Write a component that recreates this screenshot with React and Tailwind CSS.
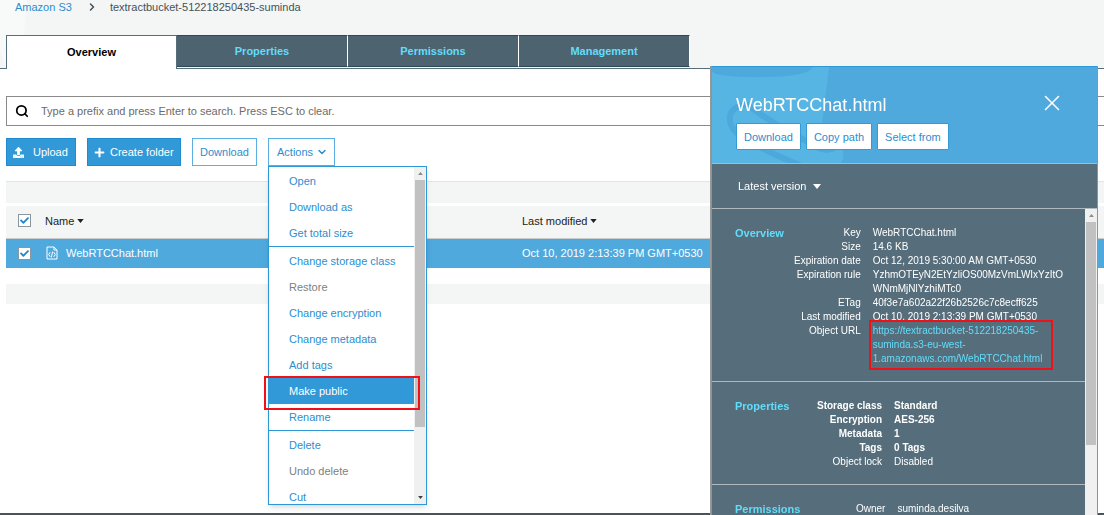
import React from "react";
import { ChevronDown, ChevronRight, Search, X } from "lucide-react";
import { FaCheck, FaPlus, FaUpload } from "react-icons/fa";

const tabs = ["Overview", "Properties", "Permissions", "Management"];

const menuGroups = [
  [{ label: "Open" }, { label: "Download as" }, { label: "Get total size" }],
  [
    { label: "Change storage class" },
    { label: "Restore", disabled: true },
    { label: "Change encryption" },
    { label: "Change metadata" },
    { label: "Add tags" },
    { label: "Make public", active: true },
    { label: "Rename" },
  ],
  [{ label: "Delete" }, { label: "Undo delete", disabled: true }, { label: "Cut" }],
];

const Triangle = ({ up = false, className = "" }) => (
  <svg viewBox="0 0 8 5" className={className} fill="currentColor" aria-hidden="true">
    <path d={up ? "M0 5h8L4 0z" : "M0 0h8L4 5z"} />
  </svg>
);

const FileCodeIcon = () => (
  <svg viewBox="0 0 12 14" className="h-[14px] w-3" fill="none" stroke="currentColor" aria-hidden="true">
    <path d="M1 1h7l3 3v9H1z" />
    <path d="M8 1v3h3" />
    <path d="M4.200 6.200 2.700 8.500l1.500 2.300M7.800 6.200l1.500 2.300-1.500 2.300M6.700 5.500 5.300 11.500" />
  </svg>
);

const Checkbox = ({ label }) => (
  <label className="relative block size-[13px]">
    <input
      type="checkbox"
      defaultChecked
      aria-label={label}
      className="block size-[13px] appearance-none border border-[#8b979d] bg-white"
    />
    <FaCheck className="pointer-events-none absolute left-0.5 top-0.5 size-[9px] text-[#1f86cc]" />
  </label>
);

const Scrollbar = ({ className = "", thumb }) => (
  <div className={`flex w-3 flex-col bg-[#f0f0f0] ${className}`} aria-hidden="true">
    <div className="flex h-[13px] shrink-0 items-center justify-center text-[#8a8a8a]">
      <Triangle up className="h-[3px] w-[5px]" />
    </div>
    <div className={`mx-px shrink-0 bg-[#c1c1c1] ${thumb}`} />
    <div className="mt-auto flex h-[13px] shrink-0 items-center justify-center text-[#404040]">
      <Triangle className="h-[3px] w-[5px]" />
    </div>
  </div>
);

const ActionsMenu = () => (
  <div className="absolute left-0 top-[28px] z-10 flex h-[339px] w-[159px] border border-[#2e97d6] bg-white shadow-md">
    <div className="relative flex-1">
      <div className="h-full overflow-hidden">
        {menuGroups.map((group, i) => (
          <ul key={i} className={`pt-px ${i > 0 ? "border-t border-[#2e97d6]" : ""}`}>
            {group.map(({ label, disabled, active }) => (
              <li key={label}>
                <button
                  disabled={disabled}
                  className={`block h-[26px] w-full pl-5 text-left ${
                    active ? "bg-[#3199d8] text-white" : disabled ? "text-[#808080]" : "text-[#2d8dd0]"
                  }`}
                >
                  {label}
                </button>
              </li>
            ))}
          </ul>
        ))}
      </div>
      <div className="pointer-events-none absolute -left-[5px] -right-[6px] top-[209px] h-[34px] border-2 border-[#ee1118]" />
    </div>
    <Scrollbar thumb="h-[247px]" />
  </div>
);

const Section = ({ title, titleWidth, rows }) => (
  <section className="flex border-t border-[#aebac0] pb-[15px] pl-[23px] pr-5 pt-[17px]">
    <h3 className={`shrink-0 text-[11px] font-bold text-[#62dcfb] ${titleWidth}`}>{title}</h3>
    <dl className="grid flex-1 grid-cols-[auto_1fr] gap-x-3">
      {rows.map(({ label, value, bold }) => (
        <div key={label} className={`contents ${bold ? "font-bold" : ""}`}>
          <dt className="whitespace-nowrap text-right">{label}</dt>
          <dd className="break-all">{value}</dd>
        </div>
      ))}
    </dl>
  </section>
);

const objectUrl = (
  <a
    href="#url"
    className="block w-[176px] text-[#62dcfb] outline-2 outline-offset-2 outline-[#ee1118]"
  >
    https://textractbucket-512218250435-
    <br />
    suminda.s3-eu-west-
    <br />
    1.amazonaws.com/WebRTCChat.html
  </a>
);

const overviewRows = [
  { label: "Key", value: "WebRTCChat.html" },
  { label: "Size", value: "14.6 KB" },
  { label: "Expiration date", value: "Oct 12, 2019 5:30:00 AM GMT+0530" },
  {
    label: "Expiration rule",
    value: (
      <>
        YzhmOTEyN2EtYzliOS00MzVmLWIxYzItO
        <br />
        WNmMjNlYzhiMTc0
      </>
    ),
  },
  { label: "ETag", value: "40f3e7a602a22f26b2526c7c8ecff625" },
  { label: "Last modified", value: "Oct 10, 2019 2:13:39 PM GMT+0530" },
  { label: "Object URL", value: objectUrl },
];

const propertyRows = [
  { label: "Storage class", value: "Standard", bold: true },
  { label: "Encryption", value: "AES-256", bold: true },
  { label: "Metadata", value: "1", bold: true },
  { label: "Tags", value: "0 Tags", bold: true },
  { label: "Object lock", value: "Disabled" },
];

const DetailsPanel = () => (
  <aside className="fixed bottom-0 right-1.5 top-[66px] flex w-[387px] flex-col overflow-hidden border-x border-[#4ba7dd] bg-[#566e7b] text-[10px] leading-[14px] text-white shadow-[-1px_0_0_#999]">
    <header className="relative h-[97px] shrink-0 border-t border-[#2e97d6] bg-[#4fa9dd] pl-6 pr-8 pt-[26px]">
      <svg viewBox="0 0 150 96" className="absolute left-0 top-0 h-24 w-[150px]" fill="none" aria-hidden="true">
        <path d="M0 0h117l-7 57 21 27q1 8-2 12H0z" fill="#57b5e4" />
        <path d="M0 0h101q-5 10-52 10T0 4z" fill="#4da8dc" />
        <path d="M34 37q-18 4-16 17 1 9 12 16 20 13 58 28" stroke="#4da8dc" strokeWidth="6" />
        <path d="M34 37q30 22 62 38 14 10 24 7 6-2 10-8" stroke="#4da8dc" strokeWidth="6" />
      </svg>
      <div className="relative flex items-start justify-between">
        <h2 className="text-[18px] leading-6">WebRTCChat.html</h2>
        <button aria-label="Close" className="-mt-[3px]">
          <X className="size-[26px]" strokeWidth={1.5} />
        </button>
      </div>
      <div className="relative mt-1.5 flex gap-[5px] text-[11px] text-[#2d8dd0]">
        {["Download", "Copy path", "Select from"].map((label) => (
          <button key={label} className="h-[27px] rounded-[1px] border border-[#349bd9] bg-white px-[7px]">
            {label}
          </button>
        ))}
      </div>
    </header>
    <div className="flex h-[45px] shrink-0 items-center border-t border-[#aebac0] pl-[26px]">
      <button className="flex items-center gap-[7px] text-[11px]">
        Latest version
        <Triangle className="h-[5px] w-2" />
      </button>
    </div>
    <div className="flex min-h-0 flex-1 overflow-hidden">
      <div className="flex-1 overflow-hidden">
        <Section title="Overview" titleWidth="w-[59px]" rows={overviewRows} />
        <Section title="Properties" titleWidth="w-[82px]" rows={propertyRows} />
        <Section
          title="Permissions"
          titleWidth="w-[121px]"
          rows={[{ label: "Owner", value: "suminda.desilva" }]}
        />
      </div>
      <Scrollbar className="h-[340px] border-t border-[#aebac0]" thumb="h-[223px]" />
    </div>
  </aside>
);

const App = () => (
  <div className="flex min-h-screen flex-col bg-white font-['Liberation_Sans',Arial,sans-serif] text-[11px] leading-[14px] text-[#222]">
    <div className="relative bg-[#f4f6f6]">
      <svg viewBox="0 0 30 68" className="absolute left-0 top-0 h-[68px] w-[30px]" fill="#f8f9f9" aria-hidden="true">
        <path d="M0 0h27l-3 34v34h-18L0 52z" />
      </svg>
      <nav className="relative flex h-[35px] items-start pl-[15px] text-[#44515a]">
        <a href="#s3" className="text-[#2d8dd0]">Amazon S3</a>
        <ChevronRight className="ml-3.5 mr-3 mt-px size-3" strokeWidth={3} />
        <span>textractbucket-512218250435-suminda</span>
      </nav>
      <div className="relative flex border-b border-[#566e7b] pl-1.5" role="tablist">
        {tabs.map((tab, i) => (
          <button
            key={tab}
            role="tab"
            aria-selected={i === 0}
            className={`font-bold ${
              i === 0
                ? "-mb-px h-[34px] w-[171px] border border-b-0 border-[#566e7b] bg-white pb-0.5 text-black"
                : "h-8 w-[171px] border-y border-r border-y-[#2f4858] border-r-white bg-[#4d6370] text-[#62dcfb]"
            }`}
          >
            {tab}
          </button>
        ))}
      </div>
    </div>

    <main className="flex-1 pl-1.5 pt-[27px]">
      <div className="flex h-[30px] items-center border border-r-0 border-[#8a8a8a] pl-2">
        <Search className="size-[14px] text-black" strokeWidth={3} />
        <input
          type="text"
          aria-label="Search by prefix"
          placeholder="Type a prefix and press Enter to search. Press ESC to clear."
          className="ml-3 flex-1 outline-none placeholder:text-[#6b6b6b]"
        />
      </div>

      <div className="mt-3 flex gap-[11px]">
        <button className="flex h-7 w-[70px] items-center gap-[9px] border border-[#1f8bd0] bg-[#3199d8] pl-1.5 text-white">
          <FaUpload className="size-[11px]" />
          Upload
        </button>
        <button className="flex h-7 w-[94px] items-center gap-[5px] border border-[#1f8bd0] bg-[#3199d8] pl-1.5 text-white">
          <FaPlus className="size-[11px]" />
          Create folder
        </button>
        <button className="h-7 w-[65px] border border-[#5bafe2] text-[#2d8dd0]">Download</button>
        <div className="relative">
          <button className="flex h-7 w-[67px] items-center justify-between border border-[#5bafe2] pl-2 pr-1.5 text-[#2d8dd0]">
            Actions
            <ChevronDown className="size-3" strokeWidth={3} />
          </button>
          <ActionsMenu />
        </div>
      </div>

      <div className="mt-[15px] h-[22px] border-t border-[#e3e5e5] bg-[#f4f6f6]" />
      <table className="mt-[3px] w-full table-fixed text-left">
        <thead>
          <tr className="h-8 border-b border-[#c9cccc] bg-[#f4f6f6]">
            <th className="w-[39px] pb-0.5 pl-3"><Checkbox label="Select all" /></th>
            <th className="w-[477px] pb-0.5 font-normal">
              <span className="flex items-center gap-[3px]">Name <Triangle className="h-1 w-[7px]" /></span>
            </th>
            <th className="pb-0.5 font-normal">
              <span className="flex items-center gap-[3px]">Last modified <Triangle className="h-1 w-[7px]" /></span>
            </th>
          </tr>
        </thead>
        <tbody>
          <tr className="h-[30px] bg-[#4fa9dd] text-white">
            <td className="pl-3"><Checkbox label="Select WebRTCChat.html" /></td>
            <td>
              <span className="flex items-center gap-2 pl-px"><FileCodeIcon /> WebRTCChat.html</span>
            </td>
            <td>Oct 10, 2019 2:13:39 PM GMT+0530</td>
          </tr>
        </tbody>
      </table>
      <div className="mt-4 h-5 bg-[#f4f6f6]" />
    </main>

    <footer className="h-0.5 bg-[#4a5358]" />
    <DetailsPanel />
  </div>
);

export default App;
